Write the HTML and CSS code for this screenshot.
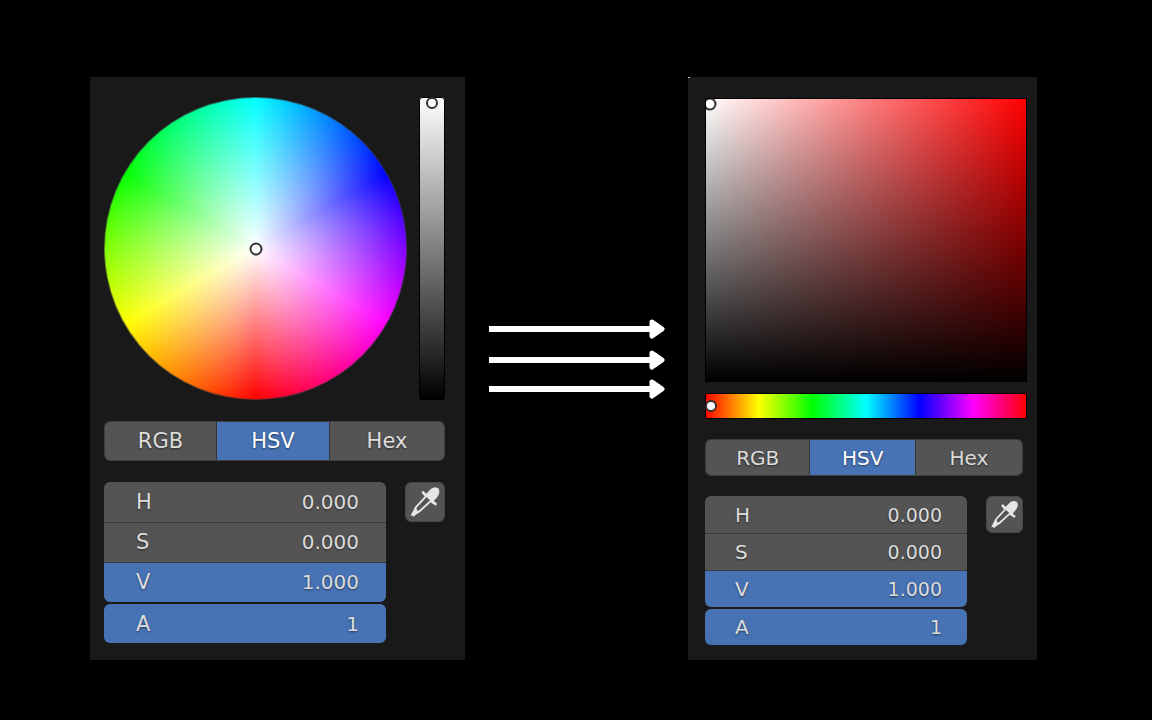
FILE: index.html
```html
<!DOCTYPE html>
<html lang="en">
<head>
    <meta charset="UTF-8">
    <meta name="viewport" content="width=device-width, initial-scale=1.0">
    <title>Color Picker Types</title>
    <link rel="stylesheet" href="styles.css">
</head>
<body>
    <main class="compare">
        <section class="panel panel-wheel">
            <div class="wheel-row">
                <div class="wheel"><span class="cursor"></span></div>
                <input class="slider value-slider" type="range" min="0" max="100" value="100" aria-label="Value">
            </div>
            <div class="tabs">
                <button type="button">RGB</button>
                <button type="button" class="active">HSV</button>
                <button type="button">Hex</button>
            </div>
            <div class="controls">
                <div class="fields">
                    <div class="group">
                        <div class="field"><label for="h1">H</label><input id="h1" type="text" value="0.000"></div>
                        <div class="field"><label for="s1">S</label><input id="s1" type="text" value="0.000"></div>
                        <div class="field full"><label for="v1">V</label><input id="v1" type="text" value="1.000"></div>
                    </div>
                    <div class="group">
                        <div class="field full"><label for="a1">A</label><input id="a1" type="text" value="1"></div>
                    </div>
                </div>
                <button type="button" class="eyedropper" aria-label="Eyedropper">
                    <svg viewBox="0 0 40 40">
                        <path class="tube" d="M21 14 L10 26 Q9 30 7 33 Q11 32 14 30 L26 19"/>
                        <path class="tip" d="M10 26 L6 33 L8 35 L15 29 L12 30 Z"/>
                        <path class="bar" d="M18 10 Q20 13 23 14 Q27 17 28 20 L31 22"/>
                        <path class="bulb" d="M21 12 L27 6 Q31 4 34 6 Q36 10 33 14 L28 20 Z"/>
                    </svg>
                </button>
            </div>
        </section>

        <svg class="arrows" viewBox="0 0 176 80">
            <path class="line" d="M0 10 H163 M0 41 H163 M0 70 H163"/>
            <path class="head" d="M163 3 L173 10 L163 17 Z M163 34 L173 41 L163 48 Z M163 63 L173 70 L163 77 Z"/>
        </svg>

        <section class="panel panel-square">
            <div class="square"><span class="cursor"></span></div>
            <input class="slider hue-slider" type="range" min="0" max="360" value="0" aria-label="Hue">
            <div class="tabs">
                <button type="button">RGB</button>
                <button type="button" class="active">HSV</button>
                <button type="button">Hex</button>
            </div>
            <div class="controls">
                <div class="fields">
                    <div class="group">
                        <div class="field"><label for="h2">H</label><input id="h2" type="text" value="0.000"></div>
                        <div class="field"><label for="s2">S</label><input id="s2" type="text" value="0.000"></div>
                        <div class="field full"><label for="v2">V</label><input id="v2" type="text" value="1.000"></div>
                    </div>
                    <div class="group">
                        <div class="field full"><label for="a2">A</label><input id="a2" type="text" value="1"></div>
                    </div>
                </div>
                <button type="button" class="eyedropper" aria-label="Eyedropper">
                    <svg viewBox="0 0 40 40">
                        <path class="tube" d="M21 14 L10 26 Q9 30 7 33 Q11 32 14 30 L26 19"/>
                        <path class="tip" d="M10 26 L6 33 L8 35 L15 29 L12 30 Z"/>
                        <path class="bar" d="M18 10 Q20 13 23 14 Q27 17 28 20 L31 22"/>
                        <path class="bulb" d="M21 12 L27 6 Q31 4 34 6 Q36 10 33 14 L28 20 Z"/>
                    </svg>
                </button>
            </div>
        </section>
    </main>
</body>
</html>
```
FILE: styles.css
```css
* {
    box-sizing: border-box;
}
body {
    margin: 0;
    background: #000;
    font-family: "DejaVu Sans", Verdana, sans-serif;
}
.compare {
    display: grid;
    grid-template-columns: 375fr 223fr 349fr;
    align-items: start;
    padding: 77px 115px 60px 90px;
}
.panel {
    background: #191919;
    color: #dcdcdc;
    font-size: var(--text);
}
.panel-wheel {
    --text: 21px;
    --number: 20px;
    --row: 40px;
    --left: 32px;
    --right: 27px;
    padding: 20px 20px 17px 14px;
}
.panel-square {
    --text: 20px;
    --number: 19px;
    --row: 37px;
    --left: 30px;
    --right: 25px;
    position: relative;
    padding: 21px 14px 15px 17px;
}
/* bright corner pixel */
.panel-square::before {
    content: "";
    position: absolute;
    top: 0;
    left: 0;
    width: 2px;
    height: 1px;
    background: #ccc;
}

/* pickers */
.wheel-row {
    display: flex;
    gap: 12px;
}
.wheel {
    position: relative;
    flex: 1;
    aspect-ratio: 1;
    border: 1px solid rgba(60, 60, 60, 0.6);
    border-radius: 50%;
    background:
        radial-gradient(closest-side, #fff, rgba(255, 255, 255, 0)),
        conic-gradient(#0ff, #00f, #f0f, #f00, #ff0, #0f0, #0ff);
    background-origin: border-box;
}
.square {
    position: relative;
    overflow: hidden;
    height: 284px;
    margin-right: -4px;
    border: 1px solid #000;
    background:
        linear-gradient(to top, #000, rgba(0, 0, 0, 0)),
        linear-gradient(to right, #fff, #f00);
}
.cursor {
    position: absolute;
    width: 13px;
    height: 13px;
    border: 2px solid #333;
    border-radius: 50%;
    background: #fff;
    transform: translate(-50%, -50%);
}
.wheel .cursor {
    top: 50%;
    left: 50%;
}
.square .cursor {
    top: 5px;
    left: 4px;
}
.slider {
    -webkit-appearance: none;
    appearance: none;
    display: block;
    margin: 0;
    box-shadow: inset 0 0 0 1px #000;
}
.slider::-webkit-slider-thumb {
    -webkit-appearance: none;
    width: 12px;
    height: 12px;
    border: 2px solid #333;
    border-radius: 50%;
    background: #fff;
}
.value-slider {
    writing-mode: vertical-lr;
    direction: rtl;
    width: 26px;
    height: auto;
    border-radius: 4px;
    background: linear-gradient(#fff, #000);
}
.hue-slider {
    width: calc(100% + 4px);
    height: 26px;
    margin-top: 11px;
    border-radius: 2px;
    background: linear-gradient(to right, #f00, #ff0, #0f0, #0ff, #00f, #f0f, #f00);
}

/* mode tabs */
.tabs {
    display: grid;
    grid-template-columns: 112fr 113fr 115fr;
    gap: 1px;
    height: var(--row);
    overflow: hidden;
    border: 1px solid #3d3d3d;
    border-radius: 6px;
    background: #333;
}
.panel-wheel .tabs {
    margin: 21px 0;
}
.panel-square .tabs {
    margin: 20px 0;
}
button {
    padding: 0;
    border: 0;
    background: #545454;
    color: inherit;
    font: inherit;
    text-shadow: 0 1px 2px rgba(0, 0, 0, 0.5);
}
button.active {
    background: #4772b3;
    color: #fff;
}

/* number fields */
.controls {
    display: flex;
    align-items: flex-start;
    justify-content: space-between;
    gap: 19px;
}
.fields {
    display: flex;
    flex: 1;
    flex-direction: column;
    gap: 2px;
    min-width: 0;
}
.group {
    overflow: hidden;
    border-radius: 6px;
}
.field {
    display: flex;
    align-items: center;
    height: var(--row);
    padding: 0 var(--right) 0 var(--left);
    background: #545454;
    text-shadow: 0 1px 2px rgba(0, 0, 0, 0.5);
}
.field + .field {
    box-shadow: inset 0 1px #3a3a3a;
}
.group + .group .field {
    height: calc(var(--row) - 1px);
}
.field.full {
    background: #4772b3;
}
.field input {
    flex: 1;
    width: 0;
    min-width: 0;
    padding: 0;
    border: 0;
    background: none;
    color: inherit;
    font: inherit;
    font-size: var(--number);
    text-align: right;
    text-shadow: inherit;
}
.eyedropper {
    width: var(--row);
    height: var(--row);
    border: 1px solid #474747;
    border-radius: 6px;
}
.eyedropper svg {
    display: block;
    width: 100%;
}
.tube,
.bar {
    fill: none;
    stroke: #e6e6e6;
    stroke-width: 2;
    stroke-linecap: round;
}
.bar {
    stroke-width: 3;
}
.tip,
.bulb {
    fill: #e6e6e6;
    stroke: #e6e6e6;
    stroke-linejoin: round;
}

/* arrows between the panels */
.arrows {
    width: 100%;
    padding: 0 23px 0 24px;
    margin-top: 242px;
}
.line {
    stroke: #fff;
    stroke-width: 6;
}
.head {
    fill: #fff;
    stroke: #fff;
    stroke-width: 5;
    stroke-linejoin: round;
}
```
